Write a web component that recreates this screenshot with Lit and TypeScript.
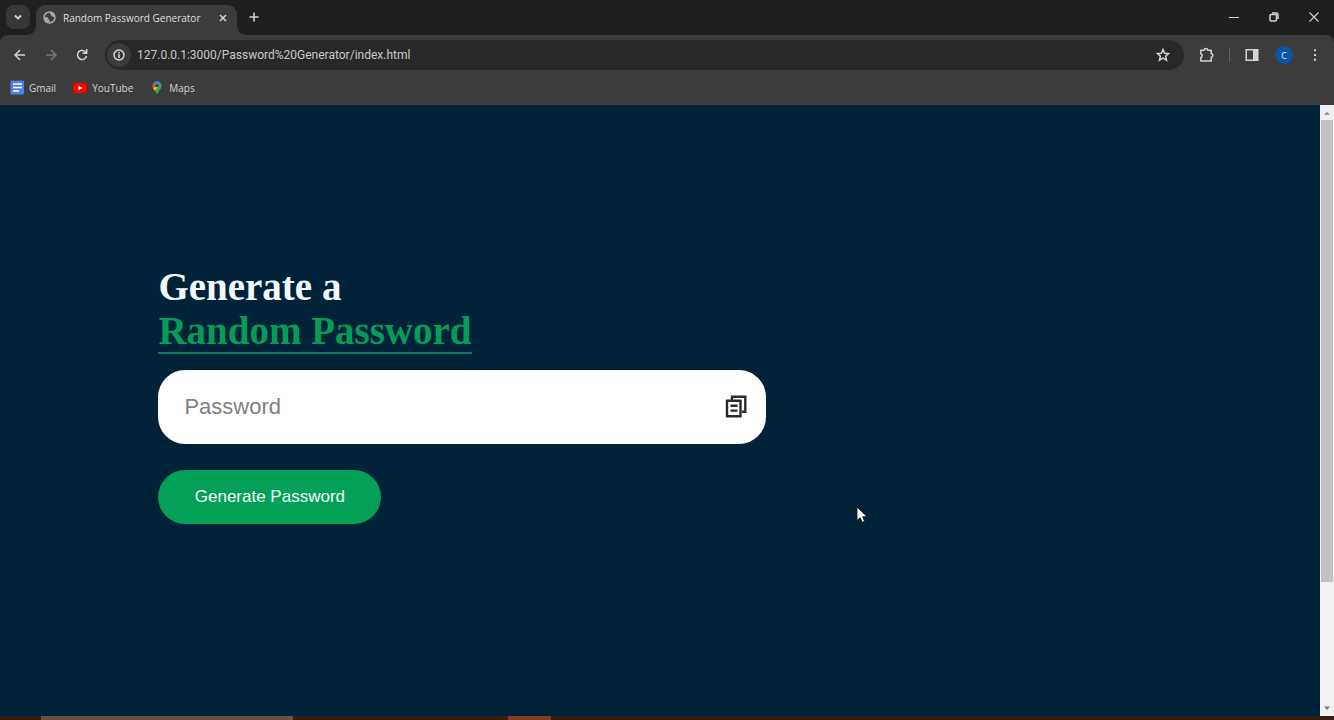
import { LitElement, html, css } from "lit";
import { customElement, state } from "lit/decorators.js";

const CHARS = "ABCDEFGHIJKLMNOPQRSTUVWXYZabcdefghijklmnopqrstuvwxyz0123456789@#$&*()/<>";

@customElement("browser-chrome")
class BrowserChrome extends LitElement {
  static styles = css`
    :host { display: block; background: #3c3c3c; color: #d4d4d4; font-family: "Open Sans", "Noto Sans", sans-serif; }
    svg { display: block; fill: none; stroke: currentColor; stroke-width: 1.5; }
    button { display: grid; place-items: center; border: 0; padding: 0; margin: 0; background: none; color: inherit; font: inherit; }
    .strip { display: flex; height: 35px; background: #1f1f1f; }
    .search { width: 24px; height: 24px; margin: 5px 6px 0; border-radius: 8px; background: #373737; }
    .tab { position: relative; display: flex; align-items: center; box-sizing: border-box; width: 201px; height: 30px; margin-top: 5px; padding: 0 5px 5px 7px; border-radius: 9px 9px 0 0; background: #3c3c3c; font-size: 10px; }
    .tab::before, .tab::after { content: ""; position: absolute; bottom: 0; width: 8px; height: 8px; }
    .tab::before { right: 100%; background: radial-gradient(circle at 0 0, #1f1f1f 7px, #3c3c3c 8px); }
    .tab::after { left: 100%; background: radial-gradient(circle at 100% 0, #1f1f1f 7px, #3c3c3c 8px); }
    .title { flex: 1; margin-left: 7px; white-space: nowrap; color: #dedede; }
    .close, .add { width: 18px; height: 18px; }
    .add { margin: 8px 0 0 8px; }
    .window { display: flex; margin-left: auto; }
    .window button { width: 40px; height: 34px; }
    .toolbar { display: flex; align-items: center; height: 40px; padding-right: 4px; border-radius: 8px 8px 0 0; background: #3c3c3c; }
    .wrap { background: #1f1f1f; }
    .nav { display: flex; padding-left: 4px; }
    .nav button { width: 31px; height: 30px; }
    .off { color: #777; }
    .address { display: flex; align-items: center; flex: 1; height: 30px; margin-left: 8px; border-radius: 15px; background: #282828; }
    .info { width: 24px; height: 24px; margin-left: 2px; border-radius: 50%; background: #3c3c3c; }
    .url { flex: 1; min-width: 0; border: 0; padding: 0; margin-left: 6px; outline: 0; background: none; color: #c8c8c8; font: 12px Roboto, "Open Sans", sans-serif; }
    .star { width: 24px; margin-right: 9px; }
    .tools { display: flex; align-items: center; }
    .tools button { height: 30px; width: 30px; }
    .tools .ext { margin: 0 7px 0 8px; }
    .rule { width: 1px; height: 14px; margin-right: 7px; background: #606060; }
    .tools .avatar { width: 18px; height: 18px; margin: 0 7px 0 8px; border-radius: 50%; background: #0b57a4; color: #e4edf6; font-size: 9px; }
    .marks { display: flex; gap: 16px; height: 30px; padding: 0 0 0 10px; font-size: 10px; }
    .marks a { display: flex; align-items: center; height: 25px; gap: 4px; color: inherit; text-decoration: none; }
  `;

  render() {
    return html`
      <div class="strip">
        <button class="search" aria-label="Search tabs"><svg width="10" height="10"><path d="M2 3.5l3 3 3-3" stroke-width="1.8" /></svg></button>
        <div class="tab">
          <svg width="13" height="13" viewBox="0 0 13 13"><circle cx="6.5" cy="6.5" r="5.5" stroke="#a9a9a9" /><path d="M1 6.5c3-1 4 0 4.500 1.500.5 1.500 2 1 1 3.500C4 12 1 10 1 6.500zM7 1c-1 2 1 1.500 1 3S10 6 12 6c0-3-2.500-5-5-5z" fill="#a9a9a9" stroke="none" /></svg>
          <span class="title">Random Password Generator</span>
          <button class="close" aria-label="Close tab"><svg width="8" height="8"><path d="M1 1l6 6M7 1L1 7" /></svg></button>
        </div>
        <button class="add" aria-label="New tab"><svg width="10" height="10"><path d="M5 .5v9M.5 5h9" /></svg></button>
        <div class="window">
          <button aria-label="Minimize"><svg width="10" height="10"><path d="M0 5.500h10" stroke-width="1" /></svg></button>
          <button aria-label="Restore"><svg width="10" height="10" stroke-width="1.200"><rect x="1" y="2.500" width="6.500" height="6.500" rx="1" /><path d="M3 1h4.500q1.500 0 1.500 1.500V7" /></svg></button>
          <button aria-label="Close"><svg width="10" height="10"><path d="M.5.5l9 9M9.500.5l-9 9" stroke-width="1.100" /></svg></button>
        </div>
      </div>
      <div class="wrap">
        <div class="toolbar">
          <div class="nav">
            <button aria-label="Back"><svg width="12" height="12"><path d="M11 6H1.500M6 1L1 6l5 5" /></svg></button>
            <button class="off" aria-label="Forward"><svg width="12" height="12"><path d="M1 6h9.500M6 1l5 5-5 5" /></svg></button>
            <button aria-label="Reload"><svg width="12" height="12"><path d="M10 3.500A4.600 4.600 0 1 0 10.600 7M10.700 0v4.300H6.500" /></svg></button>
          </div>
          <div class="address">
            <button class="info" aria-label="Site information"><svg width="12" height="12"><circle cx="6" cy="6" r="5" /><path d="M6 5.300V9M6 3v1.400" /></svg></button>
            <input class="url" aria-label="Address" value="127.0.0.1:3000/Password%20Generator/index.html" />
            <button class="star" aria-label="Bookmark this page"><svg width="14" height="14"><path d="M7 1.500l1.600 3.700 4 .35-3 2.650.9 3.950L7 10.050 3.500 12.150l.9-3.950-3-2.650 4-.35z" /></svg></button>
          </div>
          <div class="tools">
            <button class="ext" aria-label="Extensions"><svg width="16" height="16"><path d="M1.800 3.200h3.400a1.700 1.700 0 0 1 3.400 0h3.600v3.600a1.700 1.700 0 0 1 0 3.400v3.700H1.800v-3.500a1.900 1.900 0 0 0 0-3.700z" stroke-linejoin="round" /></svg></button>
            <span class="rule"></span>
            <button aria-label="Side panel"><svg width="14" height="14"><rect x="1.250" y="1.750" width="11.500" height="10.500" /><path d="M8 1.500h5v11H8z" fill="currentColor" stroke="none" /></svg></button>
            <button class="avatar" aria-label="Profile">C</button>
            <button aria-label="Menu"><svg width="4" height="14"><path d="M2 1.200v2M2 6v2M2 10.800v2" stroke-width="2" /></svg></button>
          </div>
        </div>
      </div>
      <nav class="marks">
        <a href="#gmail"><svg width="15" height="15"><rect x=".5" y=".5" width="13.500" height="14" rx="1" fill="#4e80ee" stroke="none" /><path d="M3 4h9M3 7.500h9M3 11h6" stroke="#fff" /></svg>Gmail</a>
        <a href="#youtube"><svg width="16" height="12"><rect x="1" y="1" width="14" height="10" rx="2.500" fill="#f00" stroke="none" /><path d="M6.500 3.800v4.400L10.300 6z" fill="#fff" stroke="none" /></svg>YouTube</a>
        <a href="#maps"><svg width="16" height="14" viewBox="0 0 16 14"><g stroke="none"><path d="M8 14C7.500 10.500 3.500 9 3.500 4.800A4.500 4.500 0 0 1 12.500 4.800C12.500 9 8.500 10.500 8 14z" fill="#34a853" /><path d="M8 5L4.500 1.800A5 5 0 0 0 4 7z" fill="#ea4335" /><path d="M8 5l3.700-2.700A4.500 4.500 0 0 0 4.600 2z" fill="#4285f4" /><path d="M8 5L4 7l1.500 2.500L9.500 6z" fill="#fbbc04" /><circle cx="8" cy="4.700" r="1.600" fill="#3c3c3c" /></g></svg>Maps</a>
      </nav>
    `;
  }
}

@customElement("password-page")
class PasswordPage extends LitElement {
  static styles = css`
    :host { display: flex; min-width: 0; background: #002339; }
    .page { flex: 1; min-width: 0; display: flex; flex-direction: column; justify-content: center; padding: 0 12% 33px; }
    form { display: flex; flex-direction: column; align-items: flex-start; max-width: 608px; margin: 0; }
    h1 { margin: 0; color: #f3faff; font: bold 39px/46px "Liberation Serif", "Times New Roman", serif; }
    .accent { display: table; color: #059c58; border-bottom: 2px solid #087a55; line-height: 42px; }
    .display { display: flex; align-items: center; box-sizing: border-box; width: 100%; height: 74px; margin: 16px 0 26px; padding: 0 18px 0 26px; border-radius: 27px; background: #fff; }
    .display input { flex: 1; min-width: 0; border: 0; outline: 0; padding: 0; background: none; color: #222; font: 22px "Liberation Sans", Arial, sans-serif; }
    .display input::placeholder { color: #808080; opacity: 1; }
    .copy { border: 0; padding: 0; background: none; color: #2b2b2b; }
    .copy svg { display: block; }
    .generate { width: 223px; height: 54px; border: 0; border-radius: 27px; padding: 0; background: #05a057; color: #f2fff8; font: 17px "Liberation Sans", Arial, sans-serif; }
    .cursor { position: absolute; left: 856px; top: 506px; pointer-events: none; }
  `;

  @state() private password = "";

  private generate(event: Event) {
    event.preventDefault();
    this.password = Array.from({ length: 12 }, () => CHARS[Math.floor(Math.random() * CHARS.length)]).join("");
  }

  private copy() {
    navigator.clipboard?.writeText(this.password);
  }

  render() {
    return html`
      <main class="page">
        <form @submit=${this.generate}>
          <h1>Generate a <span class="accent">Random Password</span></h1>
          <div class="display">
            <input aria-label="Password" placeholder="Password" readonly .value=${this.password} />
            <button class="copy" type="button" aria-label="Copy password" @click=${this.copy}>
              <svg width="24" height="24" fill="none" stroke="currentColor" stroke-width="2.400"><path d="M8 5V1.700h13.300v15.100H18M3 5.700h13.500v15.600H3z" /><path d="M6.500 10.800h7M6.500 15.600h7" /></svg>
            </button>
          </div>
          <button class="generate" type="submit">Generate Password</button>
        </form>
      </main>
      <svg class="cursor" width="12" height="18"><path d="M1 1v13.500l3.200-2.900 2 4.700 2.400-1-2-4.600H11z" fill="#fff" stroke="#111" stroke-width=".8" /></svg>
    `;
  }
}

@customElement("app-root")
class AppRoot extends LitElement {
  static styles = css`
    :host { display: grid; grid-template-rows: auto 1fr 4px; height: 100vh; overflow: hidden; }
    .view { display: flex; min-height: 0; }
    password-page { flex: 1; }
    .scroll { display: flex; flex-direction: column; align-items: center; box-sizing: border-box; width: 14px; background: #f1f1f1; }
    .scroll svg { flex: none; fill: #777; }
    .track { flex: 1; width: 12px; }
    .thumb { height: 79.5%; background: #c1c1c1; }
    .taskbar { display: flex; background: #381c12; }
    .running { width: 252px; margin-left: 41px; background: #704d46; }
    .active { width: 43px; margin-left: 215px; background: #843b28; }
  `;

  render() {
    return html`
      <browser-chrome></browser-chrome>
      <div class="view">
        <password-page></password-page>
        <div class="scroll" aria-hidden="true">
          <svg width="14" height="15"><path d="M4 10l3-3.500 3 3.500z" fill="#999" /></svg>
          <div class="track"><div class="thumb"></div></div>
          <svg width="14" height="15"><path d="M4 5.500h6L7 9z" /></svg>
        </div>
      </div>
      <div class="taskbar"><div class="running"></div><div class="active"></div></div>
    `;
  }
}
